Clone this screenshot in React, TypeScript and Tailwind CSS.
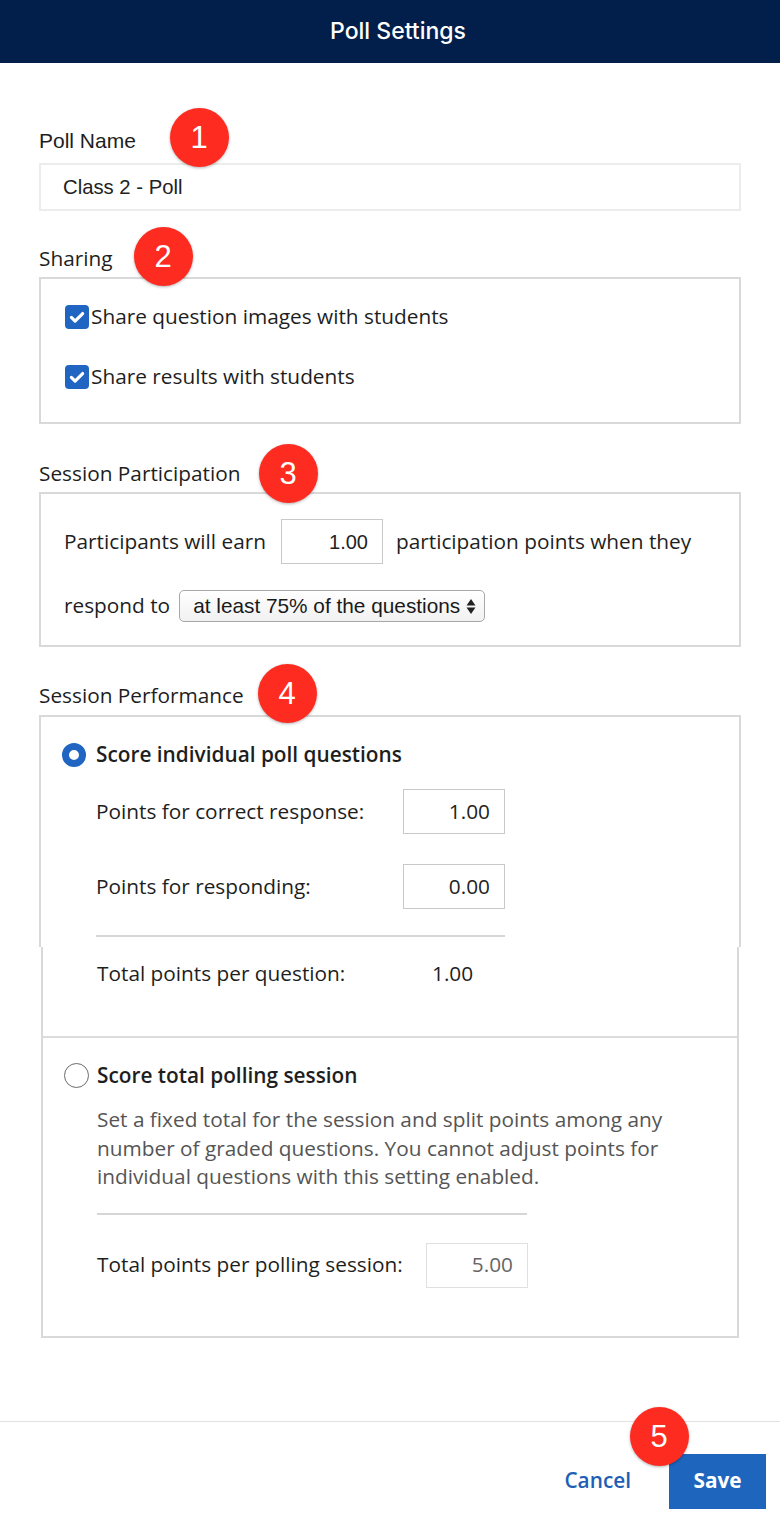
import React from 'react'

// ─── Small pieces ─────────────────────────────────────────────

function Badge({ n, x, y }: { n: number; x: number; y: number }) {
  return (
    <div
      className="absolute flex h-[59px] w-[59px] items-center justify-center rounded-full bg-[#fd2b20] text-[31px] leading-none text-white shadow-[0_1px_3px_rgba(0,0,0,0.3)] font-['Liberation_Sans',Arial,sans-serif]"
      style={{ left: x - 29.5, top: y - 29.5 }}
    >
      {n}
    </div>
  )
}

function Check() {
  return (
    <span className="flex h-[24px] w-[24px] shrink-0 items-center justify-center rounded-[4px] bg-[#1f65c1]">
      <svg width="18" height="18" viewBox="0 0 16 16" fill="none">
        <path d="M3 8.3l3.3 3.3L13 4.9" stroke="white" strokeWidth="2.8" strokeLinecap="round" strokeLinejoin="round" />
      </svg>
    </span>
  )
}

function NumBox({ value, muted, helv }: { value: string; muted?: boolean; helv?: boolean }) {
  return (
    <div
      className={
        'flex h-[45px] w-[102px] items-center justify-end border border-[#c9c9c9] pr-[14px] ' +
        (muted ? 'border-[#e0e0e0] text-[#666]' : 'text-[#222]') +
        (helv ? " font-['Liberation_Sans',Arial,sans-serif] text-[20px]" : '')
      }
    >
      {value}
    </div>
  )
}

function Label({ children, helv }: { children: React.ReactNode; helv?: boolean }) {
  return (
    <div
      className={
        'h-[24px] leading-[24px] text-[#1e1e1e] ' +
        (helv ? "font-['Liberation_Sans',Arial,sans-serif] text-[21px]" : '')
      }
    >
      {children}
    </div>
  )
}

// ─── Page ─────────────────────────────────────────────────────

export default function App() {
  return (
    <div className="relative min-h-[1536px] w-[780px] bg-white font-['Open_Sans',sans-serif] text-[20.8px] text-[#1e1e1e]">
      {/* Header */}
      <div className="flex h-[63px] items-center justify-center bg-[#021f4b] pl-[16px] font-['Inter',sans-serif] text-[23px] font-medium text-white">
        Poll Settings
      </div>

      <div className="px-[39px]">
        {/* Poll name */}
        <div className="mt-[66px]">
          <Label helv>Poll Name</Label>
          <div className="mt-[10px] flex h-[48px] items-center border-2 border-[#ececec] pl-[22px] font-['Liberation_Sans',Arial,sans-serif] text-[20.3px] text-[#222]">
            Class 2 - Poll
          </div>
        </div>

        {/* Sharing */}
        <div className="mt-[35px]">
          <Label>Sharing</Label>
          <div className="mt-[7px] border-2 border-[#d9d9d9] pb-[33px] pl-[24px] pt-[26px]">
            <div className="flex h-[24px] items-center gap-[2px]">
              <Check />
              <span>Share question images with students</span>
            </div>
            <div className="mt-[36px] flex h-[24px] items-center gap-[2px]">
              <Check />
              <span>Share results with students</span>
            </div>
          </div>
        </div>

        {/* Session participation */}
        <div className="mt-[37px]">
          <Label>Session Participation</Label>
          <div className="mt-[7px] border-2 border-[#d9d9d9] pb-[23px] pl-[23px] pt-[25px]">
            <div className="flex h-[45px] items-center">
              <span>Participants will earn</span>
              <div className="ml-[15px] mr-[13px]">
                <NumBox value="1.00" helv />
              </div>
              <span>participation points when they</span>
            </div>
            <div className="mt-[26px] flex h-[32px] items-center">
              <span>respond to</span>
              <div className="ml-[9px] flex h-[32px] w-[306px] items-center justify-between rounded-[5px] border border-[#a8a8a8] bg-gradient-to-b from-white to-[#f1f1f1] pl-[13px] pr-[8px] font-['Liberation_Sans',Arial,sans-serif] text-[20.8px] text-[#1a1a1a]">
                <span className="whitespace-nowrap">at least 75% of the questions</span>
                <svg width="10" height="17" viewBox="0 0 10 17" className="shrink-0">
                  <path d="M5 1L9.5 7.5H0.5z" fill="#222" />
                  <path d="M5 16L0.5 9.5h9z" fill="#222" />
                </svg>
              </div>
            </div>
          </div>
        </div>

        {/* Session performance */}
        <div className="mt-[36px]">
          <Label>Session Performance</Label>
          <div className="mt-[8px] border-x-2 border-t-2 border-[#d9d9d9] pb-[10px] pl-[21px] pt-[26px]">
            <div className="flex h-[24px] items-center gap-[10px]">
              <span className="h-[24px] w-[24px] shrink-0 rounded-full border-[7.5px] border-[#1f65c1] bg-white" />
              <span className="font-semibold">Score individual poll questions</span>
            </div>
            <div className="ml-[34px]">
              <div className="mt-[22px] flex items-center">
                <span className="w-[307px]">Points for correct response:</span>
                <NumBox value="1.00" />
              </div>
              <div className="mt-[30px] flex items-center">
                <span className="w-[307px]">Points for responding:</span>
                <NumBox value="0.00" />
              </div>
              <div className="mt-[26px] h-[2px] w-[409px] bg-[#d6d6d6]" />
            </div>
          </div>

          <div className="mx-[2px] border-x-2 border-b-2 border-[#d9d9d9]">
            <div className="flex h-[89px] items-start pl-[54px] pt-[14px]">
              <span className="w-[335px] leading-[24px]">Total points per question:</span>
              <span className="leading-[24px]">1.00</span>
            </div>
            <div className="border-t-2 border-[#dcdcdc] pb-[48px] pl-[21px] pt-[25px]">
              <div className="flex h-[25px] items-center gap-[8px]">
                <span className="h-[25px] w-[25px] shrink-0 rounded-full border-[1.5px] border-[#6b6b6b] bg-white" />
                <span className="font-semibold">Score total polling session</span>
              </div>
              <div className="ml-[33px]">
                <p className="mt-[17px] w-[590px] leading-[28.5px] text-[#555]">
                  Set a fixed total for the session and split points among any number of graded questions. You cannot
                  adjust points for individual questions with this setting enabled.
                </p>
                <div className="mt-[22px] h-[2px] w-[430px] bg-[#d6d6d6]" />
                <div className="mt-[28px] flex items-center">
                  <span className="w-[329px]">Total points per polling session:</span>
                  <NumBox value="5.00" muted />
                </div>
              </div>
            </div>
          </div>
        </div>
      </div>

      {/* Footer */}
      <div className="mt-[83px] flex items-center justify-end gap-[38px] border-t border-[#e2e2e2] pr-[14px] pt-[32px]">
        <button className="font-semibold text-[#1e5fb5]">Cancel</button>
        <button className="flex h-[55px] w-[97px] items-center justify-center bg-[#1e65bd] font-bold text-white">
          Save
        </button>
      </div>

      {/* Annotation badges */}
      <Badge n={1} x={199} y={137} />
      <Badge n={2} x={163} y={256} />
      <Badge n={3} x={288} y={473} />
      <Badge n={4} x={287} y={693} />
      <Badge n={5} x={659} y={1436} />
    </div>
  )
}
